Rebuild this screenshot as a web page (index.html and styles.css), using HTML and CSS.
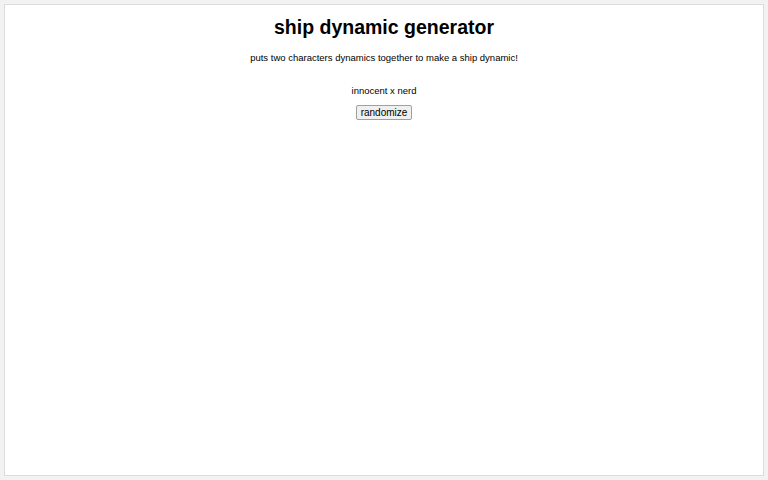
FILE: index.html
```html
<!DOCTYPE html>
<html lang="en">
<head>
  <meta charset="UTF-8">
  <meta name="viewport" content="width=device-width, initial-scale=1.0">
  <title>ship dynamic generator</title>
  <link rel="stylesheet" href="styles.css">
</head>
<body>
  <div class="page">
    <h1>ship dynamic generator</h1>
    <p class="tagline">puts two characters dynamics together to make a ship dynamic!</p>

    <p id="result" class="result">innocent x nerd</p>
    <button id="randomBtn" type="button">randomize</button>
  </div>

  <script>
    const dynamics = ['innocent', 'nerd', 'grumpy', 'sunshine', 'rival', 'jock', 'loner', 'clown', 'royal', 'rebel'];
    const result = document.getElementById('result');

    document.getElementById('randomBtn').addEventListener('click', () => {
      const a = dynamics[Math.floor(Math.random() * dynamics.length)];
      const b = dynamics[Math.floor(Math.random() * dynamics.length)];
      result.textContent = a + ' x ' + b;
    });
  </script>
</body>
</html>
```

FILE: styles.css
```css
html, body {
  height: 100%;
}

body {
  margin: 0;
  padding: 4px;
  box-sizing: border-box;
  background-color: #f2f2f2;
  font-family: 'Liberation Sans', Arial, sans-serif;
  color: #000;
}

.page {
  height: 100%;
  box-sizing: border-box;
  background-color: #fff;
  border: 1px solid #dcdcdc;
  text-align: center;
  padding-top: 11px;
}

h1 {
  font-size: 19.5px;
  font-weight: bold;
  margin: 0 0 13px;
}

.tagline {
  font-size: 9.5px;
  margin: 0 0 22px;
}

.result {
  font-size: 9.5px;
  margin: 0 0 6px;
}

button {
  font-family: inherit;
  font-size: 10px;
  padding: 1px 4px;
  background-color: #f0f0f0;
  border: 1px solid #a0a0a0;
  border-radius: 2px;
  color: #000;
}
```
